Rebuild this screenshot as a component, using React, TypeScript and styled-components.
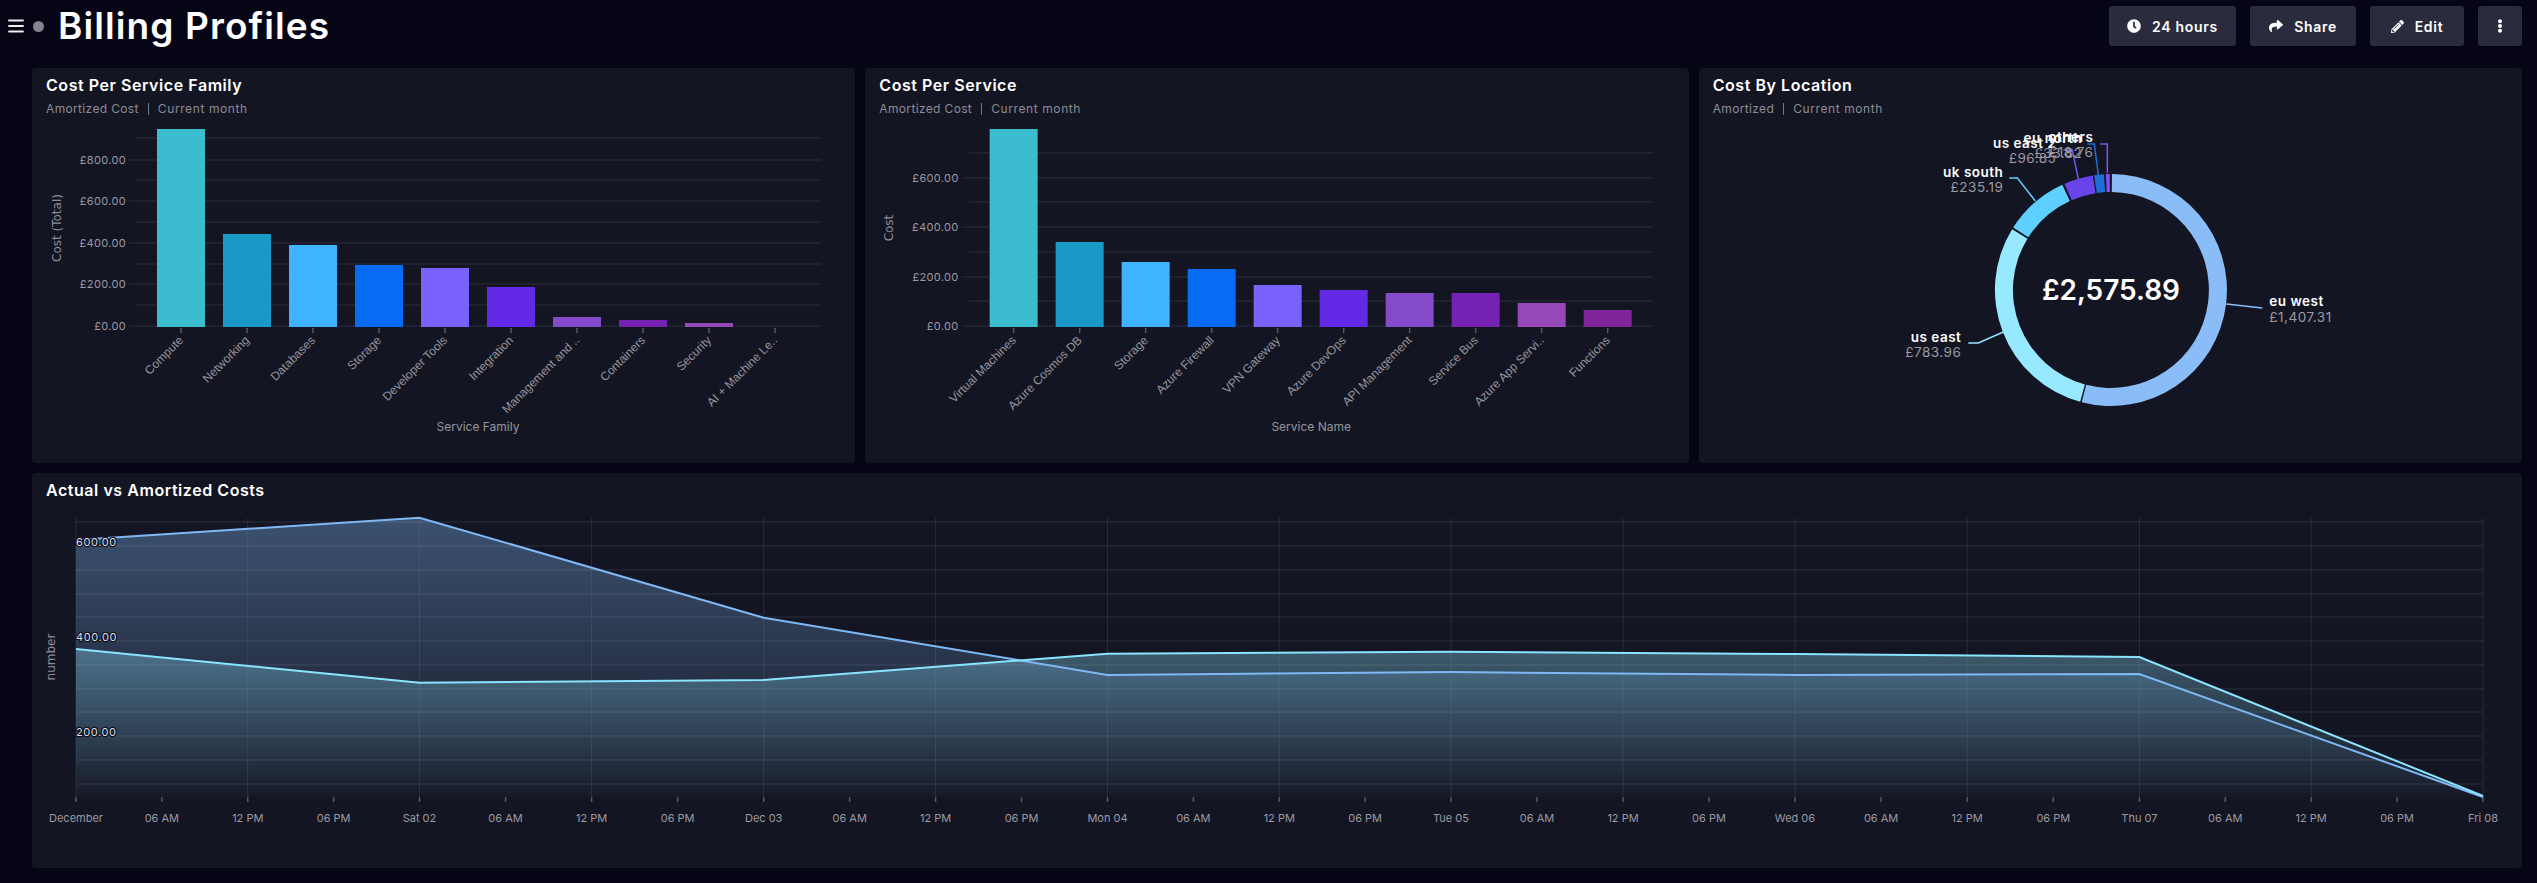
import React, { ReactElement } from 'react'
import styled, { createGlobalStyle } from 'styled-components'
import { FaClock, FaShare, FaPencilAlt, FaEllipsisV } from 'react-icons/fa'

const GlobalStyle = createGlobalStyle`
  html, body {
    margin: 0;
    padding: 0;
    background: #050516;
    font-family: 'Inter', 'Liberation Sans', sans-serif;
  }
`

const Page = styled.div`
  width: 2537px;
  height: 883px;
  overflow: hidden;
  background: #050516;
  display: flex;
  flex-direction: column;
`

const Header = styled.div`
  height: 68px;
  flex: none;
  display: flex;
  justify-content: space-between;
  padding: 6px 15px 0 8px;
  box-sizing: border-box;
`

const TitleGroup = styled.div`
  display: flex;
  align-items: center;
  height: 40px;
`

const StatusDot = styled.span`
  width: 11px;
  height: 11px;
  border-radius: 50%;
  background: #85858f;
  margin-left: 9px;
`

const PageTitle = styled.h1`
  margin: 0 0 0 14px;
  color: #fff;
  font-size: 37px;
  font-weight: 600;
  letter-spacing: 1.1px;
  line-height: 40px;
`

const Actions = styled.div`
  display: flex;
  gap: 14px;
`

const ActionButton = styled.button<{ $width: number }>`
  width: ${p => p.$width}px;
  height: 40px;
  border: 0;
  border-radius: 3px;
  background: #2a2c3d;
  color: #fff;
  font-family: inherit;
  font-size: 14px;
  font-weight: 600;
  letter-spacing: 0.7px;
  display: flex;
  align-items: center;
  justify-content: center;
  gap: 11px;
  padding: 0;
`

const Grid = styled.div`
  display: grid;
  grid-template-columns: repeat(3, 1fr);
  grid-template-rows: 395px 395px;
  gap: 10px;
  padding: 0 15px 0 32px;
`

const Panel = styled.section<{ $wide?: boolean }>`
  background: #141522;
  border-radius: 4px;
  display: flex;
  flex-direction: column;
  min-width: 0;
  grid-column: ${p => (p.$wide ? '1 / -1' : 'auto')};
`

const PanelHead = styled.div<{ $height: number }>`
  height: ${p => p.$height}px;
  flex: none;
  padding: 7px 14px 0;
  box-sizing: border-box;
`

const PanelTitle = styled.h2`
  margin: 0;
  color: #fff;
  font-size: 16px;
  font-weight: 600;
  letter-spacing: 0.55px;
  line-height: 20px;
`

const PanelSub = styled.div`
  margin-top: 5px;
  display: flex;
  align-items: center;
  color: #8c8c96;
  font-size: 12px;
  line-height: 16px;
  letter-spacing: 0.35px;
`

const SubNote = styled.span`
  margin-top: 1px;
  letter-spacing: 0.6px;
`

const SubDivider = styled.span`
  width: 1px;
  height: 12px;
  background: #6a7a90;
  margin: 1px 9px 0;
`

const ChartSvg = styled.svg`
  display: block;
  width: 100%;
  flex: 1;
  min-height: 0;
`

const GridLine = styled.line`
  stroke: rgba(255, 255, 255, 0.055);
  stroke-width: 2;
`

const VerticalLine = styled.line`
  stroke: rgba(120, 140, 170, 0.2);
  stroke-width: 1;
`

const Tick = styled.line`
  stroke: #4a5a70;
  stroke-width: 1.5;
`

const AxisValue = styled.text`
  fill: #9a9aa2;
  font-family: 'Inter', sans-serif;
  font-size: 11px;
  letter-spacing: 0.35px;
  text-anchor: end;
  dominant-baseline: central;
`

const SlantLabel = styled.text`
  fill: #96969e;
  font-family: 'Liberation Sans', sans-serif;
  font-size: 12px;
  text-anchor: end;
`

const AxisName = styled.text`
  fill: #96969e;
  font-family: 'Inter', sans-serif;
  font-size: 12px;
  text-anchor: middle;
  dominant-baseline: central;
`

const SideName = styled.text`
  fill: #8c8c96;
  font-family: 'DejaVu Sans', sans-serif;
  font-size: 12px;
  text-anchor: middle;
  dominant-baseline: central;
`

const TimeLabel = styled.text`
  fill: #9a9aa2;
  font-family: 'Inter', sans-serif;
  font-size: 11px;
  text-anchor: middle;
  dominant-baseline: central;
`

const OverValue = styled.text`
  fill: #dcdce0;
  font-family: 'Inter', sans-serif;
  font-size: 11px;
  letter-spacing: 0.6px;
  dominant-baseline: central;
  paint-order: stroke;
  stroke: #11121d;
  stroke-width: 2.5px;
`

const DonutName = styled.text<{ $anchor?: string }>`
  fill: #fff;
  font-family: 'Inter', sans-serif;
  font-size: 13.5px;
  font-weight: 600;
  letter-spacing: 0.5px;
  text-anchor: ${p => p.$anchor || 'end'};
`

const DonutValue = styled.text<{ $anchor?: string }>`
  fill: #9a9aa2;
  font-family: 'Inter', sans-serif;
  font-size: 13.5px;
  letter-spacing: 0.5px;
  text-anchor: ${p => p.$anchor || 'end'};
`

const DonutTotal = styled.text`
  fill: #fff;
  font-family: 'Inter', sans-serif;
  font-size: 28px;
  font-weight: 600;
  text-anchor: middle;
`

const barColors = ['#3bbccf', '#1a98c6', '#3eb3ff', '#076bf3', '#7b61fb', '#6229e6', '#8549cb', '#7521b4', '#9648b7', '#82249a']

type BarChartProps = {
  left: number
  firstBar: number
  labelsRight: number
  sideX: number
  side: string
  axisName: string
  axisX: number
  gridRight: number
  bars: { label: string; top: number }[]
  major: { y: number; text: string }[]
  minor: number[]
}

function BarChart(props: BarChartProps): ReactElement {
  const { left, firstBar, labelsRight, sideX, side, axisName, axisX, gridRight, bars, major, minor } = props
  return (
    <ChartSvg viewBox={`${left} 120 823.33 343`}>
      {minor.map(y => (
        <GridLine key={y} x1={labelsRight + 10} x2={gridRight} y1={y} y2={y} />
      ))}
      {major.map(m => (
        <React.Fragment key={m.text}>
          <GridLine x1={labelsRight + 3} x2={gridRight} y1={m.y} y2={m.y} />
          <AxisValue x={labelsRight} y={m.y}>{m.text}</AxisValue>
        </React.Fragment>
      ))}
      {bars.map((b, i) => {
        const x = firstBar + i * 66
        return (
          <React.Fragment key={b.label}>
            <rect x={x} y={b.top} width={48} height={327 - b.top} fill={barColors[i]} />
            <Tick x1={x + 24} x2={x + 24} y1={328} y2={333} />
            <SlantLabel transform={`translate(${x + 27} 341) rotate(-45)`}>{b.label}</SlantLabel>
          </React.Fragment>
        )
      })}
      <AxisName x={axisX} y={427}>{axisName}</AxisName>
      <SideName transform={`translate(${sideX} 228) rotate(-90)`}>{side}</SideName>
    </ChartSvg>
  )
}

const familyBars = [
  { label: 'Compute', top: 129 },
  { label: 'Networking', top: 234 },
  { label: 'Databases', top: 245 },
  { label: 'Storage', top: 265 },
  { label: 'Developer Tools', top: 268 },
  { label: 'Integration', top: 287 },
  { label: 'Management and ..', top: 317 },
  { label: 'Containers', top: 320 },
  { label: 'Security', top: 323 },
  { label: 'AI + Machine Le..', top: 327 },
]

const serviceBars = [
  { label: 'Virtual Machines', top: 129 },
  { label: 'Azure Cosmos DB', top: 242 },
  { label: 'Storage', top: 262 },
  { label: 'Azure Firewall', top: 269 },
  { label: 'VPN Gateway', top: 285 },
  { label: 'Azure DevOps', top: 290 },
  { label: 'API Management', top: 293 },
  { label: 'Service Bus', top: 293 },
  { label: 'Azure App Servi..', top: 303 },
  { label: 'Functions', top: 310 },
]

const cx = 2110.6
const cy = 290

function arc(from: number, to: number, outer: number, inner: number): string {
  const pt = (a: number, r: number): string => {
    const rad = ((a - 90) * Math.PI) / 180
    return `${(cx + r * Math.cos(rad)).toFixed(2)} ${(cy + r * Math.sin(rad)).toFixed(2)}`
  }
  const large = to - from > 180 ? 1 : 0
  return `M${pt(from, outer)} A${outer} ${outer} 0 ${large} 1 ${pt(to, outer)} L${pt(to, inner)} A${inner} ${inner} 0 ${large} 0 ${pt(from, inner)} Z`
}

const slices = [
  { from: 0.5, to: 194.6, fill: '#8abdf8' },
  { from: 195.4, to: 301.6, fill: '#96e9fe' },
  { from: 302.6, to: 335.2, fill: '#5fcfff' },
  { from: 336.4, to: 351, fill: 'url(#dither)' },
  { from: 351.7, to: 356.6, fill: '#1c6fd4' },
  { from: 357.5, to: 359.4, fill: '#8450f0' },
]

const leaders = [
  { points: '2226,304 2262,308', color: '#8abdf8' },
  { points: '2003,332 1978,343 1968,343', color: '#96e9fe' },
  { points: '2035,201 2017,178 2009,178', color: '#5fcfff' },
  { points: '2078,179 2072,150 2063,150', color: '#7650f5' },
  { points: '2098,175 2094,144 2087,144', color: '#1c6fd4' },
  { points: '2107,173 2107,144 2100,144', color: '#8450f0' },
]

const donutLabels = [
  { name: 'eu west', value: '£1,407.31', x: 2269, y: 306, vy: 322, anchor: 'start' },
  { name: 'us east', value: '£783.96', x: 1961, y: 342, vy: 357, anchor: 'end' },
  { name: 'uk south', value: '£235.19', x: 2003, y: 177, vy: 192, anchor: 'end' },
  { name: 'us east 2', value: '£96.85', x: 2056, y: 148, vy: 163, anchor: 'end' },
  { name: 'eu north', value: '£33.82', x: 2082, y: 143, vy: 158, anchor: 'end' },
  { name: 'others', value: '£18.76', x: 2093, y: 142, vy: 157, anchor: 'end' },
]

function DonutChart(): ReactElement {
  return (
    <ChartSvg viewBox="1698.67 120 823.33 343">
      <defs>
        <pattern id="dither" width="2" height="2" patternUnits="userSpaceOnUse">
          <rect width="2" height="2" fill="#7650f5" />
          <rect width="1" height="1" fill="#5c36e0" />
          <rect x="1" y="1" width="1" height="1" fill="#5c36e0" />
        </pattern>
      </defs>
      {slices.map(s => (
        <path key={s.from} d={arc(s.from, s.to, 116, 98)} fill={s.fill} />
      ))}
      {leaders.map(l => (
        <polyline key={l.points} points={l.points} fill="none" stroke={l.color} strokeWidth={1.5} />
      ))}
      {donutLabels.map(l => (
        <React.Fragment key={l.name}>
          <DonutValue $anchor={l.anchor} x={l.x} y={l.vy}>{l.value}</DonutValue>
          <DonutName $anchor={l.anchor} x={l.x} y={l.y}>{l.name}</DonutName>
        </React.Fragment>
      ))}
      <DonutTotal x={cx} y={300}>£2,575.89</DonutTotal>
    </ChartSvg>
  )
}

const hours = [76, 419.5, 763.7, 1107.5, 1451, 1795, 2139.4, 2483]
const seriesA = [540, 517.7, 617.7, 675, 672, 675, 674, 797]
const seriesB = [649, 682.7, 680, 653.7, 651.7, 654, 657, 796]
const rows = [522, 546, 570, 594, 617, 641, 665, 689, 712, 736, 760, 784]
const dayNames = ['December', 'Sat 02', 'Dec 03', 'Mon 04', 'Tue 05', 'Wed 06', 'Thu 07', 'Fri 08']
const stepNames = ['06 AM', '12 PM', '06 PM']

const toLine = (ys: number[]): string => ys.map((y, i) => `${hours[i]},${y}`).join(' ')
const toArea = (ys: number[]): string => `${toLine(ys)} 2483,797 76,797`

function LineChart(): ReactElement {
  const ticks: { x: number; text: string }[] = []
  hours.forEach((x, i) => {
    ticks.push({ x, text: dayNames[i] })
    if (i < hours.length - 1) {
      const step = (hours[i + 1] - x) / 4
      stepNames.forEach((t, j) => ticks.push({ x: x + step * (j + 1), text: t }))
    }
  })

  return (
    <ChartSvg viewBox="32 513 2490 355">
      <defs>
        <linearGradient id="fillA" x1="0" y1="517" x2="0" y2="797" gradientUnits="userSpaceOnUse">
          <stop offset="0" stopColor="#7fb8f5" stopOpacity="0.37" />
          <stop offset="1" stopColor="#7fb8f5" stopOpacity="0.02" />
        </linearGradient>
        <linearGradient id="fillB" x1="0" y1="650" x2="0" y2="797" gradientUnits="userSpaceOnUse">
          <stop offset="0" stopColor="#8be4ff" stopOpacity="0.34" />
          <stop offset="1" stopColor="#8be4ff" stopOpacity="0" />
        </linearGradient>
      </defs>
      <polygon points={toArea(seriesA)} fill="url(#fillA)" />
      <polygon points={toArea(seriesB)} fill="url(#fillB)" />
      {rows.map(y => (
        <GridLine key={y} x1={76} x2={2483} y1={y} y2={y} />
      ))}
      {ticks.map((t, i) => (
        <React.Fragment key={t.x}>
          {i % 2 === 0 && <VerticalLine x1={t.x} x2={t.x} y1={518} y2={797} />}
          <Tick x1={t.x} x2={t.x} y1={797} y2={802} />
          <TimeLabel x={t.x} y={818}>{t.text}</TimeLabel>
        </React.Fragment>
      ))}
      <polyline points={toLine(seriesA)} fill="none" stroke="#7fb8f5" strokeWidth={2} />
      <polyline points={toLine(seriesB)} fill="none" stroke="#8be4ff" strokeWidth={2} />
      <OverValue x={76} y={542}>600.00</OverValue>
      <OverValue x={76} y={637}>400.00</OverValue>
      <OverValue x={76} y={732}>200.00</OverValue>
      <SideName transform="translate(51 657) rotate(-90)">number</SideName>
    </ChartSvg>
  )
}

export default function App(): ReactElement {
  return (
    <Page>
      <GlobalStyle />
      <Header>
        <TitleGroup>
          <svg width="16" height="14" viewBox="0 0 16 14">
            <path d="M1 1.5h14M1 7h14M1 12.5h14" stroke="#eee" strokeWidth="1.8" strokeLinecap="round" />
          </svg>
          <StatusDot />
          <PageTitle>Billing Profiles</PageTitle>
        </TitleGroup>
        <Actions>
          <ActionButton $width={127}><FaClock size={14} />24 hours</ActionButton>
          <ActionButton $width={106}><FaShare size={14} />Share</ActionButton>
          <ActionButton $width={94}><FaPencilAlt size={13} />Edit</ActionButton>
          <ActionButton $width={44}><FaEllipsisV size={14} /></ActionButton>
        </Actions>
      </Header>
      <Grid>
        <Panel>
          <PanelHead $height={52}>
            <PanelTitle>Cost Per Service Family</PanelTitle>
            <PanelSub>Amortized Cost<SubDivider /><SubNote>Current month</SubNote></PanelSub>
          </PanelHead>
          <BarChart
            left={32}
            firstBar={157}
            labelsRight={126}
            sideX={57}
            side="Cost (Total)"
            axisName="Service Family"
            axisX={478}
            gridRight={821}
            bars={familyBars}
            major={[
              { y: 326, text: '£0.00' },
              { y: 284, text: '£200.00' },
              { y: 243, text: '£400.00' },
              { y: 201, text: '£600.00' },
              { y: 160, text: '£800.00' },
            ]}
            minor={[138, 180, 222, 264, 305]}
          />
        </Panel>
        <Panel>
          <PanelHead $height={52}>
            <PanelTitle>Cost Per Service</PanelTitle>
            <PanelSub>Amortized Cost<SubDivider /><SubNote>Current month</SubNote></PanelSub>
          </PanelHead>
          <BarChart
            left={865.33}
            firstBar={990}
            labelsRight={959}
            sideX={889.5}
            side="Cost"
            axisName="Service Name"
            axisX={1311.5}
            gridRight={1654}
            bars={serviceBars}
            major={[
              { y: 326, text: '£0.00' },
              { y: 277, text: '£200.00' },
              { y: 227, text: '£400.00' },
              { y: 178, text: '£600.00' },
            ]}
            minor={[153, 202, 252, 301]}
          />
        </Panel>
        <Panel>
          <PanelHead $height={52}>
            <PanelTitle>Cost By Location</PanelTitle>
            <PanelSub>Amortized<SubDivider /><SubNote>Current month</SubNote></PanelSub>
          </PanelHead>
          <DonutChart />
        </Panel>
        <Panel $wide>
          <PanelHead $height={40}>
            <PanelTitle>Actual vs Amortized Costs</PanelTitle>
          </PanelHead>
          <LineChart />
        </Panel>
      </Grid>
    </Page>
  )
}
